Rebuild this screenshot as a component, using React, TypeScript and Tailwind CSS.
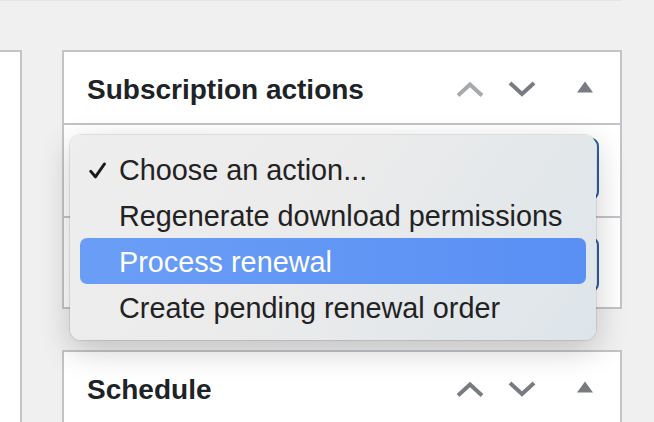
import React from "react";

function ChevronUp({ color }: { color: string }) {
  return (
    <svg width="28" height="16" viewBox="0 0 28 16" className="block">
      <polyline points="2,14.5 14,3.5 26,14.5" fill="none" stroke={color} strokeWidth="4" strokeLinejoin="miter" />
    </svg>
  );
}

function ChevronDown({ color }: { color: string }) {
  return (
    <svg width="28" height="16" viewBox="0 0 28 16" className="block">
      <polyline points="2,2 14,13 26,2" fill="none" stroke={color} strokeWidth="4" strokeLinejoin="miter" />
    </svg>
  );
}

function Triangle() {
  return (
    <svg width="16" height="12" viewBox="0 0 16 12" className="block">
      <polygon points="0,11.5 8,0.5 16,11.5" fill="#787c82" />
    </svg>
  );
}

function PanelHeader({ title, upColor }: { title: string; upColor: string }) {
  return (
    <div className="flex h-[71px] items-center pt-[5px] pl-[23px] pr-[27px]">
      <h2 className="text-[28px] font-bold leading-none text-[#1d2327]">{title}</h2>
      <div className="ml-auto flex items-center">
        <div className="-mt-[3px]">
          <ChevronUp color={upColor} />
        </div>
        <div className="ml-[24px] -mt-[2px]">
          <ChevronDown color="#787c82" />
        </div>
        <div className="ml-[41px] -mt-[6px]">
          <Triangle />
        </div>
      </div>
    </div>
  );
}

function CheckMark() {
  return (
    <svg width="17" height="17" viewBox="0 0 17 17" className="block">
      <path d="M1.8 9.4 L6.4 14.8 L15.4 2" fill="none" stroke="#1a1a1a" strokeWidth="3" strokeLinecap="round" strokeLinejoin="round" />
    </svg>
  );
}

const items = [
  { label: "Choose an action...", checked: true, active: false },
  { label: "Regenerate download permissions", checked: false, active: false },
  { label: "Process renewal", checked: false, active: true },
  { label: "Create pending renewal order", checked: false, active: false },
];

export default function App() {
  return (
    <div className="relative h-[422px] w-[654px] overflow-hidden bg-[#f0f0f1] font-['Liberation_Sans',Arial,sans-serif]">
      <div className="h-px w-[622px] bg-[#e5e5e6]" />
      <div className="mt-[49px] flex h-[372px]">
        <div className="w-[22px] border-t-2 border-r-2 border-[#c3c4c7] bg-white" />
        <div className="ml-[40px] flex w-[560px] flex-col gap-[41px]">
          <div className="border-2 border-[#c3c4c7] bg-white">
            <PanelHeader title="Subscription actions" upColor="#a7aaad" />
            <div className="h-[95px] border-t-2 border-b-2 border-[#c3c4c7] px-[21px] pt-[13px]">
              <div className="h-[62px] rounded-[8px] border-2 border-[#2a5fa6] bg-white" />
            </div>
            <div className="h-[89px] px-[21px] pt-[19px]">
              <div className="h-[55px] rounded-[8px] border-2 border-[#2a5fa6] bg-white" />
            </div>
          </div>
          <div className="flex-1 border-2 border-b-0 border-[#c3c4c7] bg-white">
            <PanelHeader title="Schedule" upColor="#787c82" />
          </div>
        </div>
      </div>

      <div className="absolute left-[70px] top-[135px] h-[205px] w-[526px] rounded-[11px] bg-[linear-gradient(125deg,#eeeeee_0%,#ebebeb_45%,#dde5ea_100%)] px-[10px] pt-[11px] pb-[10px] shadow-[0_0_0_1px_rgba(0,0,0,0.09),0_10px_32px_rgba(0,0,0,0.2)]">
        {items.map((it) => (
          <div
            key={it.label}
            className={
              it.active
                ? "flex h-[46px] items-center rounded-[7px] bg-[linear-gradient(90deg,#6a9ef6,#5a8ff4)] pt-[2px] text-white"
                : "flex h-[46px] items-center rounded-[7px] pt-[2px] text-[#222222]"
            }
          >
            <div className="flex w-[39px] justify-start pl-[9px]">{it.checked ? <CheckMark /> : null}</div>
            <span className="text-[28.8px] leading-none">{it.label}</span>
          </div>
        ))}
      </div>
    </div>
  );
}
